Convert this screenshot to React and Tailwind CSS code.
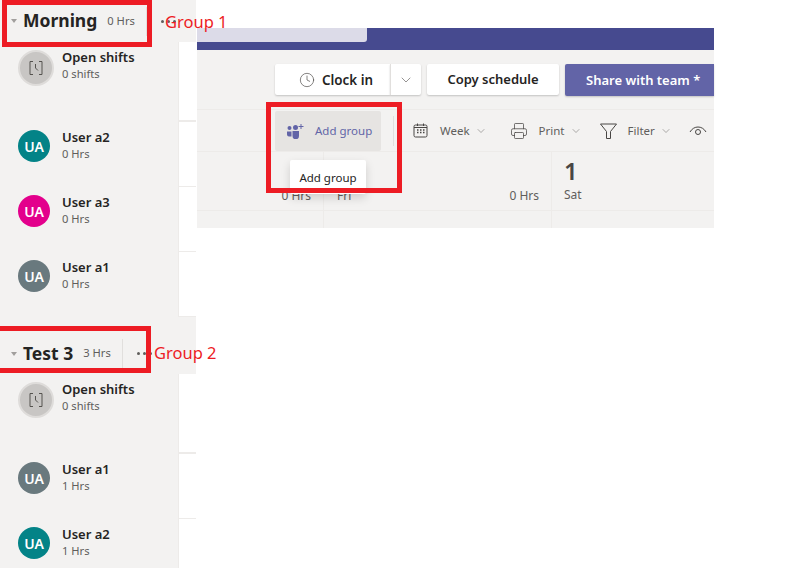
import { Clock, ChevronDown, Printer } from "lucide-react";

const font = "font-['Noto_Sans',sans-serif]";

// Open shifts placeholder avatar
function OpenShiftAvatar() {
  return (
    <div className="w-9 h-9 flex-none rounded-full bg-[#c8c6c4] border-2 border-[#dedcda] flex items-center justify-center">
      <svg width="16" height="16" viewBox="0 0 16 16" fill="none" stroke="#55534f" strokeWidth="1">
        <path d="M5 1.5H2V14.500H5M11 1.500H14V14.500H11" />
        <path d="M7.500 4V8L10 10.500" />
      </svg>
    </div>
  );
}

function UserAvatar({ color }) {
  return (
    <div className="w-9 flex-none">
      <div
        className={`w-8 h-8 rounded-full flex items-center justify-center text-white text-[14px] font-semibold ${color}`}
      >
        UA
      </div>
    </div>
  );
}

function Row({ name, sub, color, tall }) {
  return (
    <div className={`flex ${tall ? "h-[80px]" : "h-[65px]"}`}>
      <div className="w-[179px] flex-none bg-[#f3f2f1] border-r border-[#edebe9] flex gap-2 pl-[18px] pt-2">
        {color ? <UserAvatar color={color} /> : <OpenShiftAvatar />}
        <div className="-mt-[2px]">
          <div className="text-[13px] leading-[18px] font-semibold text-[#252423]">{name}</div>
          <div className="text-[11.2px] leading-[15px] text-[#605e5c]">{sub}</div>
        </div>
      </div>
      <div className={`flex-1 bg-white border-[#edebe9] ${tall ? "border-b-2" : "border-b"}`} />
    </div>
  );
}

function GroupHeader({ title, hours, height, topPad }) {
  return (
    <div className={`bg-[#f3f2f1] flex items-center ${height} ${topPad}`}>
      <span className="ml-[11px] w-0 h-0 flex-none border-x-[3.5px] border-x-transparent border-t-[4px] border-t-[#a19f9d]" />
      <span className="ml-[6px] -mt-0.5 text-[17.5px] leading-6 font-bold text-[#252423]">{title}</span>
      <span className="ml-[10px] text-[11.2px] text-[#605e5c]">{hours}</span>
      <span className="ml-[11px] w-px h-[29px] bg-[#e1dfdd]" />
      <span className="ml-[14px] flex gap-[3px]">
        <span className="w-[3px] h-[3px] rounded-full bg-[#605e5c]" />
        <span className="w-[3px] h-[3px] rounded-full bg-[#605e5c]" />
        <span className="w-[3px] h-[3px] rounded-full bg-[#605e5c]" />
      </span>
    </div>
  );
}

function AddGroupIcon() {
  return (
    <svg width="18" height="16" viewBox="0 0 18 16" fill="#6264a7" className="flex-none">
      <circle cx="2.500" cy="5" r="2" />
      <circle cx="8.500" cy="4.500" r="2.500" />
      <path d="M0 8.500h4.500v5H2a2 2 0 0 1-2-2zM5.500 8h6.500v5a3 3 0 0 1-6.500 0z" />
      <path d="M14 1v5M11.500 3.500h5" stroke="#6264a7" strokeWidth="1" fill="none" />
    </svg>
  );
}

function CalendarIcon() {
  return (
    <svg width="15" height="15" viewBox="0 0 15 15" fill="none" stroke="#484644" strokeWidth="1" className="flex-none">
      <rect x="1" y="2" width="13" height="12" rx="1.500" />
      <path d="M1 4.500h13M4.500 0.500v2.500M10.500 0.500v2.500" />
      <path d="M4 7h1.500M7 7h1.500M10 7h1.500M4 9.500h1.500M7 9.500h1.500M10 9.500h1.500" strokeWidth="1.300" />
    </svg>
  );
}

function FilterIcon() {
  return (
    <svg width="17" height="16" viewBox="0 0 17 16" fill="none" stroke="#484644" strokeWidth="1" className="ml-[18px] flex-none">
      <path d="M0.500 1H16.500L10.500 8.500V15.500H6.500V8.500Z" />
    </svg>
  );
}

function EyeIcon() {
  return (
    <svg width="18" height="10" viewBox="0 0 18 10" fill="none" stroke="#484644" strokeWidth="1" className="ml-[17px] flex-none">
      <path d="M1 6C3 2.500 6 1 9 1s6 1.500 8 5" />
      <circle cx="9" cy="6" r="2.500" />
    </svg>
  );
}

function ToolChevron() {
  return <ChevronDown size={12} strokeWidth={1} className="ml-[5px] flex-none text-[#605e5c]" />;
}

export default function App() {
  return (
    <div className={`relative w-[788px] h-[568px] overflow-hidden bg-white flex ${font}`}>
      {/* Left column with the groups */}
      <div className="w-[196px] flex-none">
        <GroupHeader title="Morning" hours="0 Hrs" height="h-[42px]" topPad="pt-0" />
        <Row name="Open shifts" sub="0 shifts" tall />
        <Row name="User a2" sub="0 Hrs" color="bg-[#038387]" />
        <Row name="User a3" sub="0 Hrs" color="bg-[#e3008c]" />
        <Row name="User a1" sub="0 Hrs" color="bg-[#69797e]" />
        <GroupHeader title="Test 3" hours="3 Hrs" height="h-[57px]" topPad="pt-[16px]" />
        <Row name="Open shifts" sub="0 shifts" tall />
        <Row name="User a1" sub="1 Hrs" color="bg-[#69797e]" />
        <Row name="User a2" sub="1 Hrs" color="bg-[#038387]" />
      </div>

      {/* Schedule panel */}
      <div className="ml-px mt-[28px] w-[517px] h-[200px] bg-[#f3f2f1] flex flex-col">
        <div className="h-[22px] bg-[#464a8f] flex-none">
          <div className="w-[170px] h-[14px] bg-[#dcdbe8] rounded-br-[3px]" />
        </div>

        <div className="h-[60px] flex-none border-b border-[#edebe9] flex items-start pt-[14px] pl-[78px] text-[#252423] text-[13px] font-semibold">
          <div className="w-[115px] h-[31px] pt-px bg-white rounded-l-[2px] shadow-[0_1px_2px_rgba(0,0,0,0.2)] flex items-center pl-[24px] gap-[7px]">
            <Clock size={16} strokeWidth={1} className="text-[#484644]" />
            <span className="text-[13.4px]">Clock in</span>
          </div>
          <div className="w-[31px] h-[31px] pt-px bg-white border-l border-[#e1dfdd] rounded-r-[2px] shadow-[0_1px_2px_rgba(0,0,0,0.2)] flex items-center justify-center">
            <ChevronDown size={16} strokeWidth={1} className="text-[#605e5c]" />
          </div>
          <div className="ml-[6px] w-[132px] h-[31px] pt-px bg-white rounded-[2px] shadow-[0_1px_2px_rgba(0,0,0,0.2)] flex items-center justify-center">
            Copy schedule
          </div>
          <div className="ml-[6px] w-[149px] h-[32px] pt-px bg-[#6264a7] rounded-l-[2px] shadow-[0_1px_2px_rgba(0,0,0,0.2)] flex items-center pl-[21px] text-white">
            Share with team *
          </div>
        </div>

        <div className="h-[42px] flex-none border-b border-[#edebe9] flex items-center pl-[78px] text-[11.5px] text-[#605e5c]">
          <div className="w-[106px] h-10 flex-none bg-[#e6e4e2] rounded-[2px] flex items-center pl-3 gap-[10px] text-[#6264a7]">
            <AddGroupIcon />
            Add group
          </div>
          <span className="ml-3 w-px h-[30px] flex-none bg-[#e1dfdd]" />
          <span className="ml-[19px] flex-none"><CalendarIcon /></span>
          <span className="ml-3">Week</span>
          <ToolChevron />
          <Printer size={18} strokeWidth={1} className="ml-[23px] flex-none text-[#484644]" />
          <span className="ml-[11px]">Print</span>
          <ToolChevron />
          <FilterIcon />
          <span className="ml-[11px]">Filter</span>
          <ToolChevron />
          <EyeIcon />
        </div>

        <div className="h-[59px] flex-none border-b border-[#edebe9] flex text-[12px] text-[#605e5c]">
          <div className="w-[127px] border-r border-[#edebe9] flex items-end justify-end pr-3 pb-[5px]">0 Hrs</div>
          <div className="w-[228px] border-r border-[#edebe9] flex items-end justify-between pl-[13px] pr-3 pb-[5px]">
            <span>Fri</span>
            <span>0 Hrs</span>
          </div>
          <div className="pl-[12px] pt-[3px]">
            <div className="text-[24px] leading-8 font-semibold text-[#484644]">1</div>
            <div className="leading-4">Sat</div>
          </div>
        </div>
        <div className="flex-1 flex">
          <div className="w-[127px] border-r border-[#edebe9]" />
          <div className="w-[228px] border-r border-[#edebe9]" />
        </div>
      </div>

      {/* Tooltip and red annotations over the screenshot */}
      <div className="absolute left-[290px] top-[160px] w-[76px] h-[34px] pt-[2px] bg-white rounded-[2px] shadow-[0_4px_10px_rgba(0,0,0,0.15)] flex items-center justify-center text-[11.5px] text-[#252423]">
        Add group
      </div>
      <div className="absolute left-[2px] top-0 w-[150px] h-[47px] border-[5px] border-[#ed1c24]" />
      <div className="absolute left-[-6px] top-[326px] w-[157px] h-[47px] border-[5px] border-[#ed1c24]" />
      <div className="absolute left-[266px] top-[102px] w-[136px] h-[91px] border-[5px] border-[#ed1c24]" />
      <div className="absolute left-[165px] top-[11px] text-[16.5px] leading-[22px] text-[#ed1c24]">Group 1</div>
      <div className="absolute left-[154px] top-[342px] text-[16.5px] leading-[22px] text-[#ed1c24]">Group 2</div>
    </div>
  );
}
